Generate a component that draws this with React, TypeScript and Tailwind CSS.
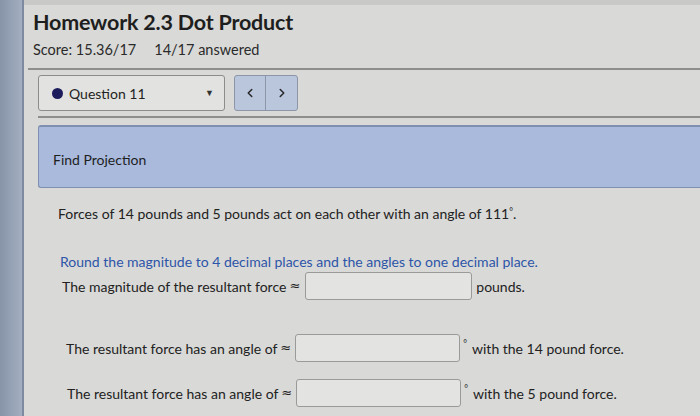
import React from 'react';
import { ChevronLeft, ChevronRight } from 'lucide-react';

const AnswerBox = ({ width }: { width: string }) => (
  <span className={`inline-block h-[28px] ${width} rounded-[3px] border border-[#9a9a98] bg-[#e3e3e1] align-middle`} />
);

const Approx = () => (
  <span className="ml-[3px] text-[13px]" style={{ fontFamily: '"DejaVu Sans", sans-serif' }}>≈</span>
);

const Degree = () => (
  <span className="ml-[3px] mt-[4px] self-start text-[9px] leading-[12px]">°</span>
);

export default function App() {
  return (
    <div
      className="flex h-[416px] w-[700px] overflow-hidden bg-[#d9d9d7] text-[#262626]"
      style={{ fontFamily: 'Lato, "Open Sans", sans-serif' }}
    >
      {/* bezel strip on the left of the photo */}
      <div className="h-full w-[24px] shrink-0 bg-gradient-to-r from-[#8794a8] to-[#a3aec0] border-r-2 border-[#7e8aa0]" />

      <div className="flex min-w-0 flex-1 flex-col border-t-[5px] border-[#c9c9c7]">
        <div className="pl-[9px] pt-[2px]">
          <h1 className="text-[21.5px] font-bold leading-[30px] tracking-[-0.2px] text-[#1e1e1e]">
            Homework 2.3 Dot Product
          </h1>
          <div className="mt-[4px] flex gap-[18px] text-[14.5px] leading-[18px] text-[#2a2a2a]">
            <span>Score: 15.36/17</span>
            <span>14/17 answered</span>
          </div>
        </div>

        <div className="ml-[4px] mt-[9px] h-[2px] bg-[#8e8e8c]" />

        <div className="ml-[14px] mt-[5px] flex items-center gap-[9px]">
          <div className="flex h-[36px] w-[187px] items-center rounded-[3px] border border-[#8c8c8a] bg-[#e2e2e0] pl-[13px] pr-[10px]">
            <span className="h-[11px] w-[11px] rounded-full bg-[#1c1c5c]" />
            <span className="ml-[6px] text-[14px] text-[#222]">Question 11</span>
            <span className="ml-auto text-[9px] text-[#333]">▼</span>
          </div>
          <div className="flex h-[36px] overflow-hidden rounded-[3px] border border-[#8c96a8] bg-[#b9c6dc]">
            <button className="flex w-[31px] items-center justify-center border-r border-[#8c96a8] text-[#2a2a2a]">
              <ChevronLeft size={14} strokeWidth={2.6} />
            </button>
            <button className="flex w-[31px] items-center justify-center text-[#2a2a2a]">
              <ChevronRight size={14} strokeWidth={2.6} />
            </button>
          </div>
        </div>

        <div className="ml-[14px] mt-[5px] h-[2px] bg-[#8e8e8c]" />

        <div className="ml-[14px] mt-[7px] flex h-[63px] items-center rounded-l-[3px] border-t-2 border-l border-b border-[#7f8fb0] bg-[#a9badd] pl-[14px] pt-[4px]">
          <span className="text-[14px] text-[#1e1e1e]">Find Projection</span>
        </div>

        <div className="pl-[34px] pt-[15px] text-[14px] text-[#222]">
          Forces of 14 pounds and 5 pounds act on each other with an angle of 111<sup className="text-[9px]">°</sup>.
        </div>

        <div className="pl-[36px] pt-[28px] text-[14px] leading-[20px] text-[#2d55a8]">
          Round the magnitude to 4 decimal places and the angles to one decimal place.
        </div>
        <div className="flex items-center pl-[38px] text-[14px] text-[#222]">
          <span>The magnitude of the resultant force</span>
          <Approx />
          <span className="ml-[5px]"><AnswerBox width="w-[167px]" /></span>
          <span className="ml-[4px]">pounds.</span>
        </div>

        <div className="mt-[34px] flex items-center pl-[42px] text-[14px] text-[#222]">
          <span>The resultant force has an angle of</span>
          <Approx />
          <span className="ml-[4px]"><AnswerBox width="w-[165px]" /></span>
          <Degree />
          <span className="ml-[5px]">with the 14 pound force.</span>
        </div>

        <div className="mt-[17px] flex items-center pl-[43px] text-[14px] text-[#222]">
          <span>The resultant force has an angle of</span>
          <Approx />
          <span className="ml-[4px]"><AnswerBox width="w-[165px]" /></span>
          <Degree />
          <span className="ml-[5px]">with the 5 pound force.</span>
        </div>
      </div>
    </div>
  );
}
